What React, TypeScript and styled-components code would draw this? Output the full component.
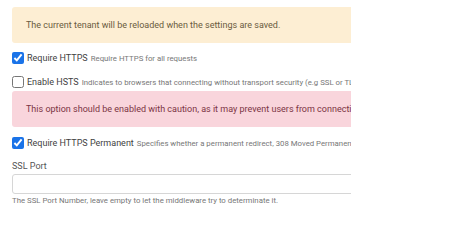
import React from "react";
import styled, { createGlobalStyle } from "styled-components";

const Global = createGlobalStyle`
  html, body { margin: 0; padding: 0; background: #ffffff; }
  body { font-family: Roboto, "Noto Sans", sans-serif; }
`;

const Page = styled.div`
  padding: 7px 0 0 12px;
  width: 339px;
  overflow: hidden;
`;

const Inner = styled.div`
  width: 520px;
  display: flex;
  flex-direction: column;
`;

const Alert = styled.div<{ $tone: "warning" | "danger" }>`
  height: 36px;
  box-sizing: border-box;
  display: flex;
  align-items: center;
  padding: 0 14px;
  border-radius: 3px;
  font-size: 9px;
  white-space: nowrap;
  background: ${(p) => (p.$tone === "warning" ? "#fdeed3" : "#f9d5dc")};
  color: ${(p) => (p.$tone === "warning" ? "#6a5b40" : "#7b3443")};
  margin-bottom: ${(p) => (p.$tone === "warning" ? "6px" : "7px")};
`;

const CheckRow = styled.label`
  display: flex;
  align-items: center;
  height: 18px;
  white-space: nowrap;
  color: #4a4a4a;
  & + & { margin-top: 6px; }
`;

const Box = styled.input`
  width: 12px;
  height: 12px;
  margin: 0 3px 0 0;
  accent-color: #1a73e8;
`;

const Title = styled.span`
  font-size: 9px;
  color: #3f3f3f;
`;

const Desc = styled.span`
  font-size: 7.8px;
  color: #777;
  margin-left: 3px;
`;

const Field = styled.div`
  display: flex;
  flex-direction: column;
  margin-top: 8px;
`;

const Label = styled.label`
  font-size: 9px;
  color: #555;
  height: 12px;
  line-height: 12px;
`;

const Input = styled.input`
  height: 20px;
  box-sizing: border-box;
  width: 420px;
  border: 1px solid #d6d6d6;
  border-radius: 3px;
  margin-top: 2px;
`;

const Help = styled.div`
  font-size: 7.8px;
  line-height: 10px;
  color: #777;
  margin-top: 2px;
  white-space: nowrap;
`;

export default function App() {
  return (
    <>
      <Global />
      <Page>
        <Inner>
          <Alert $tone="warning">The current tenant will be reloaded when the settings are saved.</Alert>
          <CheckRow>
            <Box type="checkbox" defaultChecked />
            <Title>Require HTTPS</Title>
            <Desc>Require HTTPS for all requests</Desc>
          </CheckRow>
          <CheckRow>
            <Box type="checkbox" />
            <Title>Enable HSTS</Title>
            <Desc>Indicates to browsers that connecting without transport security (e.g SSL or TLS) is not allowed</Desc>
          </CheckRow>
          <Alert $tone="danger">
            This option should be enabled with caution, as it may prevent users from connecting to the site if the certificate expires.
          </Alert>
          <CheckRow>
            <Box type="checkbox" defaultChecked />
            <Title>Require HTTPS Permanent</Title>
            <Desc>Specifies whether a permanent redirect, 308 Moved Permanently, is used</Desc>
          </CheckRow>
          <Field>
            <Label>SSL Port</Label>
            <Input type="text" />
            <Help>The SSL Port Number, leave empty to let the middleware try to determinate it.</Help>
          </Field>
        </Inner>
      </Page>
    </>
  );
}
